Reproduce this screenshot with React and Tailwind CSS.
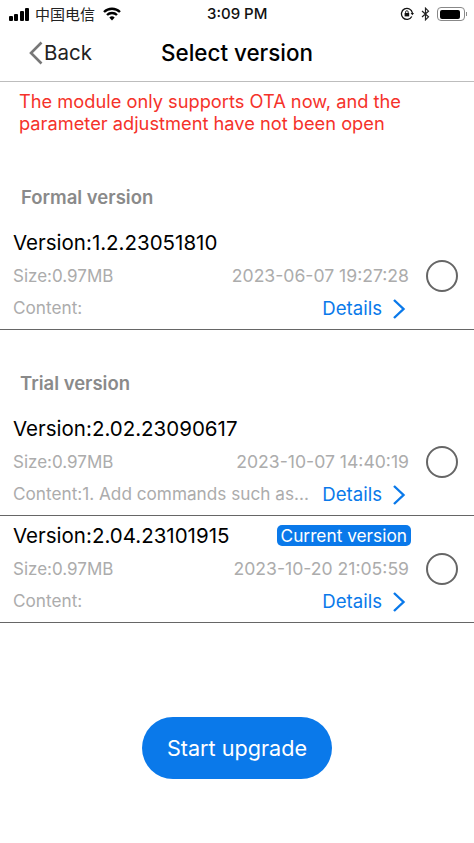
import React from "react";

const font = { fontFamily: "Inter, 'Noto Sans CJK SC', sans-serif" };

const versions = {
  formal: [{ version: "1.2.23051810", date: "2023-06-07 19:27:28", content: "Content:" }],
  trial: [
    { version: "2.02.23090617", date: "2023-10-07 14:40:19", content: "Content:1. Add commands such as..." },
    { version: "2.04.23101915", date: "2023-10-20 21:05:59", content: "Content:", current: true },
  ],
};

const StatusBar = () => (
  <div className="h-[28px] flex items-center justify-between pl-[9px] pr-[7px] relative">
    <div className="flex items-center gap-[7px]">
      <div className="flex items-end gap-[1.3px]">
        <span className="w-[4px] h-[5px] bg-black rounded-[1px]"></span>
        <span className="w-[4px] h-[7px] bg-black rounded-[1px]"></span>
        <span className="w-[4px] h-[10px] bg-black rounded-[1px]"></span>
        <span className="w-[4px] h-[13px] bg-black rounded-[1px]"></span>
      </div>
      <span className="text-[15px] leading-none text-[#222] ml-[-1px]">中国电信</span>
      <svg width="18" height="14" viewBox="0 0 18 14" className="ml-[1px]">
        <path d="M1 5 A11.5 11.5 0 0 1 17 5" fill="none" stroke="black" strokeWidth="2.4" />
        <path d="M4 8 A7.2 7.2 0 0 1 14 8" fill="none" stroke="black" strokeWidth="2.4" />
        <path d="M6.3 10.4 A4 4 0 0 1 11.7 10.4 L9 13.4 Z" fill="black" />
      </svg>
    </div>
    <span className="absolute left-[207px] text-[15px] font-medium text-[#111]">3:09 PM</span>
    <div className="flex items-center">
      <svg width="14" height="14" viewBox="0 0 14 14" className="mr-[7px]">
        <path d="M11.8 9.5 A5.5 5.5 0 1 1 12.4 6" fill="none" stroke="#111" strokeWidth="1.3" />
        <path d="M10.6 6 H14 L12.4 8.2 Z" fill="#111" />
        <rect x="4.6" y="6" width="4.6" height="3.4" fill="#111" />
        <path d="M5.6 6 V5 A1.3 1.3 0 0 1 8.2 5 V6" fill="none" stroke="#111" strokeWidth="0.9" />
      </svg>
      <svg width="9" height="14" viewBox="0 0 9 14" className="mr-[7px]">
        <path d="M1 4 L7.5 9.8 L4.5 12.8 V1.2 L7.5 4.2 L1 10" fill="none" stroke="#222" strokeWidth="1.2" />
      </svg>
      <div className="w-[28px] h-[14px] border border-[#888] rounded-[4px] p-[1.5px]">
        <div className="w-[20px] h-full bg-black rounded-[2px]"></div>
      </div>
      <span className="w-[1px] h-[4px] bg-[#888] ml-[1px]"></span>
    </div>
  </div>
);

const NavBar = () => (
  <div className="h-[54px] border-b border-[#bdbdbd] flex items-center relative">
    <div className="flex items-center pl-[29px] pb-[3px]">
      <svg width="14" height="24" viewBox="0 0 14 24">
        <path d="M12.5 1.5 L2 12 L12.5 22.5" fill="none" stroke="#777" strokeWidth="2.6" />
      </svg>
      <span className="text-[20.5px] leading-none text-[#222] ml-[1px]">Back</span>
    </div>
    <span className="absolute inset-x-0 text-center text-[22.4px] font-medium text-black pb-[4px]">Select version</span>
  </div>
);

const Row = ({ item }) => (
  <div className="flex items-center border-b border-[#666] pl-[13px] pr-[16px] h-[107px]">
    <div className="flex-1 min-w-0 pr-[17px] pb-[3px]">
      <div className="h-[34px] flex items-center justify-between">
        <span className="text-[20.5px] text-black">Version:{item.version}</span>
        {item.current && (
          <span className="bg-[#0a79ea] text-white text-[17.3px] leading-[21px] px-[4px] rounded-[5px] mr-[-2px] mb-[1px]">Current version</span>
        )}
      </div>
      <div className="h-[33px] flex items-center justify-between text-[17px] text-[#acacac]">
        <span>Size:0.97MB</span>
        <span className="text-[17.6px]">{item.date}</span>
      </div>
      <div className="h-[30px] flex items-center justify-between text-[17.2px] text-[#acacac]">
        <span className="truncate">{item.content}</span>
        <span className="flex items-center shrink-0 text-[18.6px] text-[#0a79ea] pr-[3px] pt-[2px]">
          Details
          <svg width="14" height="22" viewBox="0 0 14 22" className="ml-[10px]">
            <path d="M2 2 L11.5 11 L2 20" fill="none" stroke="#0a79ea" strokeWidth="2.4" />
          </svg>
        </span>
      </div>
    </div>
    <div className="w-[32px] h-[32px] rounded-full border-[2.5px] border-[#666] shrink-0"></div>
  </div>
);

export default function App() {
  return (
    <div className="w-[474px] h-[843px] bg-white overflow-hidden" style={font}>
      <StatusBar />
      <NavBar />
      <div className="pl-[19px] pr-[40px] pt-[8px] text-[18.25px] leading-[22px] text-[#f5322a]">
        The module only supports OTA now, and the parameter adjustment have not been open
      </div>
      <div className="pl-[21px] mt-[52px] text-[18.5px] leading-[22px] font-semibold text-[#8a8a8a]">Formal version</div>
      <div className="mt-[15px]">
        {versions.formal.map((v) => <Row key={v.version} item={v} />)}
      </div>
      <div className="pl-[20px] mt-[42px] text-[18.5px] leading-[22px] font-semibold text-[#8a8a8a]">Trial version</div>
      <div className="mt-[15px]">
        {versions.trial.map((v) => <Row key={v.version} item={v} />)}
      </div>
      <div className="flex justify-center mt-[94px]">
        <button className="w-[190px] h-[62px] rounded-full bg-[#0a79ea] text-white text-[21.6px]">Start upgrade</button>
      </div>
    </div>
  );
}
